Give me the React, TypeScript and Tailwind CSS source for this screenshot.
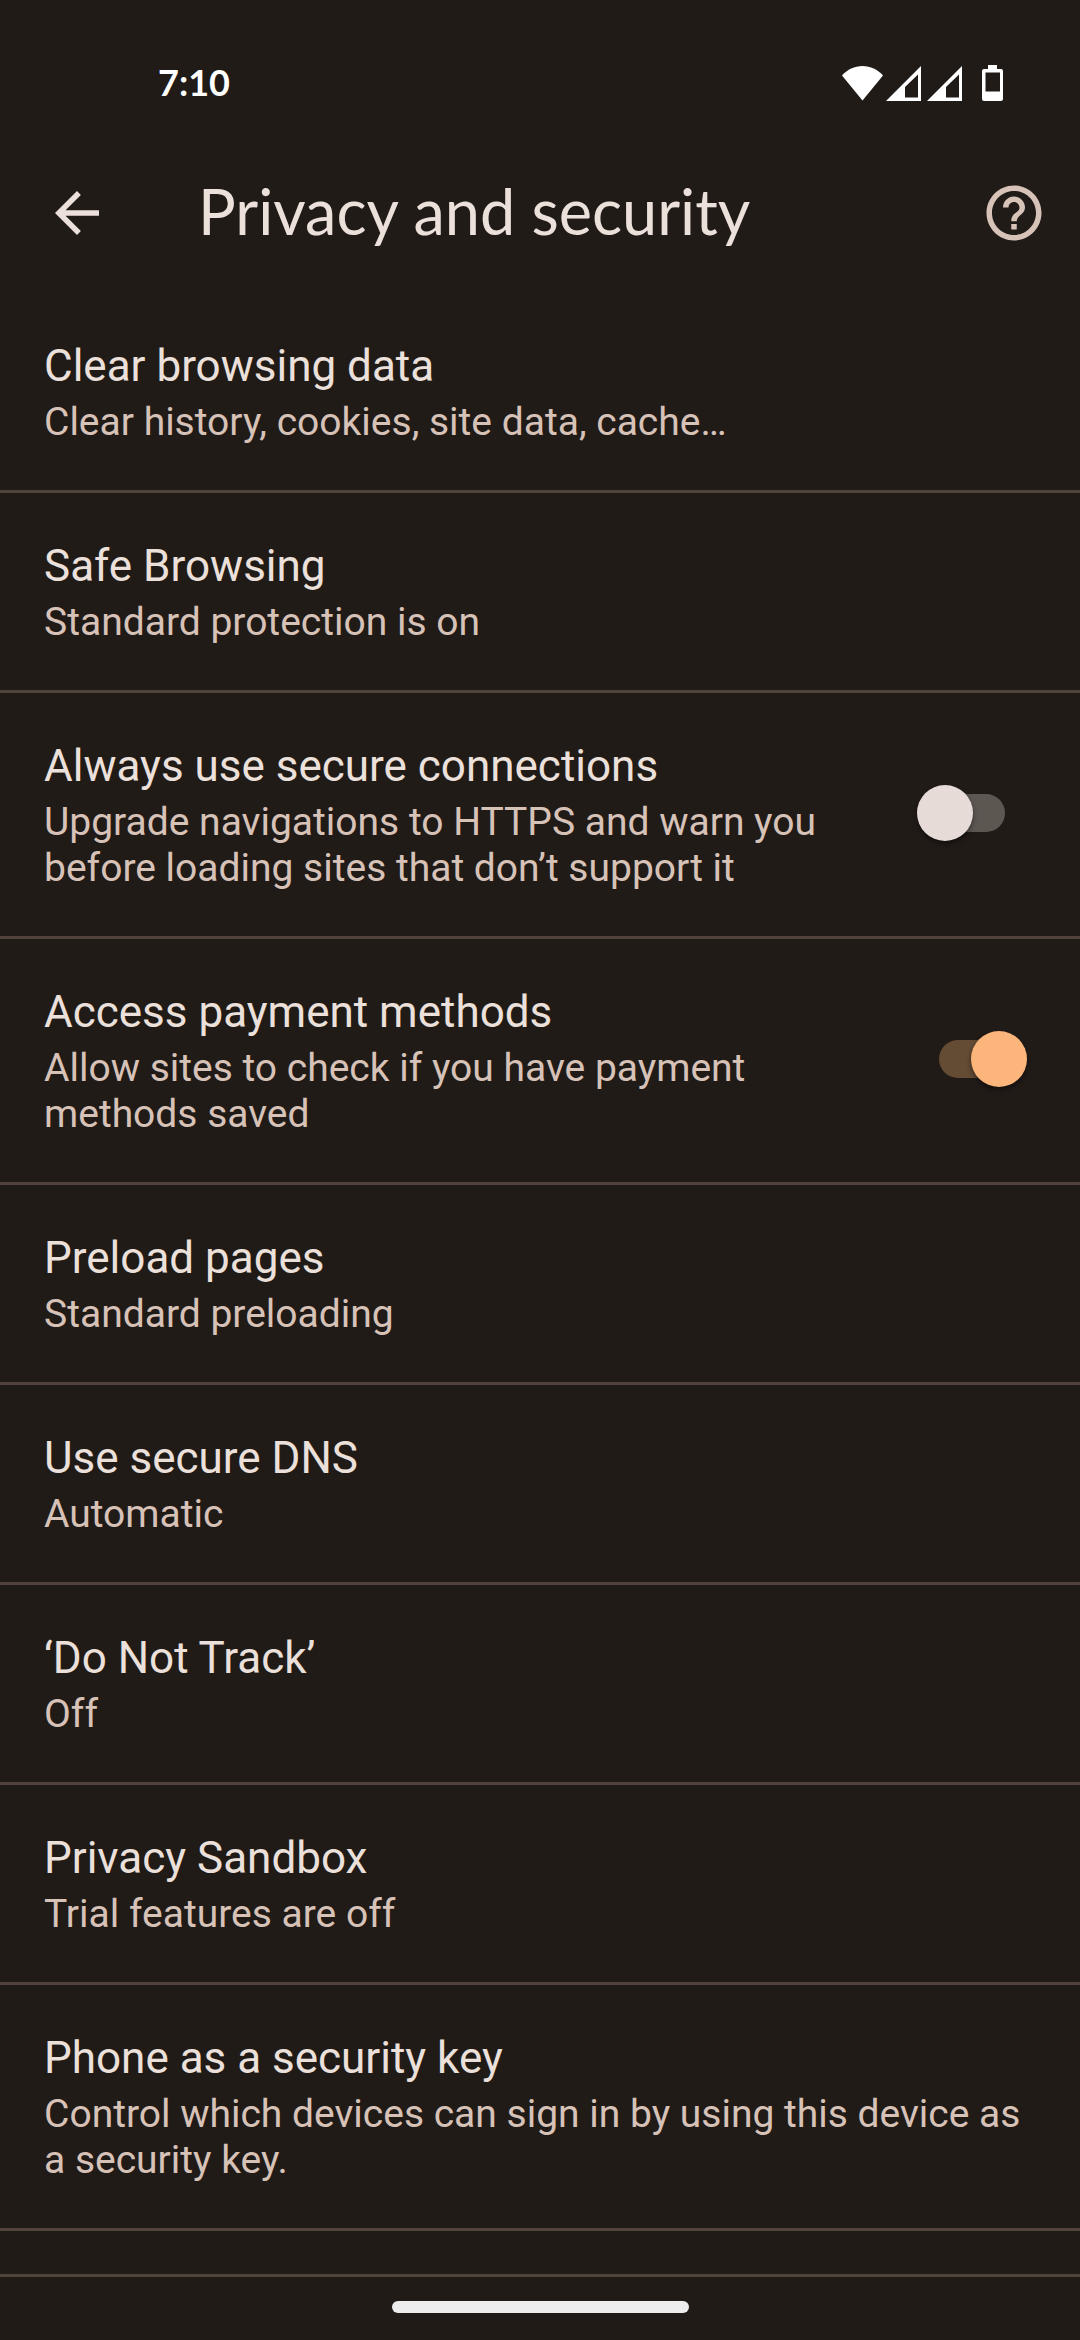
import { useState } from "react";
import { MdArrowBack, MdHelpOutline } from "react-icons/md";

type Setting = {
    title: string;
    summary: string;
    toggle?: boolean;
    on?: boolean;
};

const settings: Setting[] = [
    { title: "Clear browsing data", summary: "Clear history, cookies, site data, cache…" },
    { title: "Safe Browsing", summary: "Standard protection is on" },
    {
        title: "Always use secure connections",
        summary: "Upgrade navigations to HTTPS and warn you before loading sites that don’t support it",
        toggle: true,
        on: false,
    },
    {
        title: "Access payment methods",
        summary: "Allow sites to check if you have payment methods saved",
        toggle: true,
        on: true,
    },
    { title: "Preload pages", summary: "Standard preloading" },
    { title: "Use secure DNS", summary: "Automatic" },
    { title: "‘Do Not Track’", summary: "Off" },
    { title: "Privacy Sandbox", summary: "Trial features are off" },
    { title: "Phone as a security key", summary: "Control which devices can sign in by using this device as a security key." },
];

function SignalIcon() {
    return (
        <svg className="h-[35px] w-[35px]" viewBox="0 0 35 35" fill="#fff">
            <path fillRule="evenodd" d="M35 0v35H0zM32 8.5 19 21v10.5h13z" />
        </svg>
    );
}

function StatusBar() {
    return (
        <div className="flex items-center justify-between pt-[33px] pr-[77px] pl-[158px]">
            <span className="pb-0.5 font-[Lato,sans-serif] text-[36px] leading-[98px] font-bold text-white">7:10</span>
            <div className="flex items-center">
                <svg className="mr-[3px] h-[35px] w-[41px]" viewBox="0 0 41 35" fill="#fff">
                    <path d="M20.500 34.500 0 9.500C5.500 3.500 12.500 0 20.500 0S35.500 3.500 41 9.500z" />
                </svg>
                <SignalIcon />
                <span className="w-[6px]" />
                <SignalIcon />
                <svg className="ml-[20px] h-[36px] w-[21px]" viewBox="0 0 21 36" fill="#fff">
                    <path fillRule="evenodd" d="M6 0h9v4h4a2 2 0 0 1 2 2v28a2 2 0 0 1-2 2H2a2 2 0 0 1-2-2V6a2 2 0 0 1 2-2h4zM3.500 7.500v19h14.500v-19z" />
                </svg>
            </div>
        </div>
    );
}

function SettingText({ title, summary }: { title: string; summary: string }) {
    return (
        <span className="flex flex-1 flex-col gap-[5px]">
            <span className="text-[44px] leading-[56px] text-[#ece0db]">{title}</span>
            <span className="text-[39px] leading-[46px] text-[#d7c2b8]">{summary}</span>
        </span>
    );
}

function ToggleRow({ title, summary, on }: Setting) {
    const [checked, setChecked] = useState(!!on);
    return (
        <label className="relative flex w-full items-center gap-8 py-[45px] pr-[53px] pl-[44px]">
            <SettingText title={title} summary={summary} />
            <input
                type="checkbox"
                role="switch"
                className="peer sr-only"
                checked={checked}
                onChange={(e) => setChecked(e.target.checked)}
            />
            <span className="flex h-[60px] w-[110px] items-center justify-start pb-1 peer-checked:hidden">
                <span className="z-10 size-[56px] rounded-full bg-[#e6dbd6] shadow-[0_3px_5px_rgba(0,0,0,0.45)]" />
                <span className="-ml-[34px] h-[38px] w-[66px] rounded-full bg-[#5d5752]" />
            </span>
            <span className="hidden h-[60px] w-[110px] items-center justify-end pb-1 peer-checked:flex">
                <span className="-mr-[34px] h-[38px] w-[66px] rounded-full bg-[#634b34]" />
                <span className="z-10 size-[56px] rounded-full bg-[#fcb57b] shadow-[0_3px_5px_rgba(0,0,0,0.45)]" />
            </span>
        </label>
    );
}

export default function App() {
    return (
        <div className="flex min-h-screen flex-col bg-[#211b18] font-[Roboto,sans-serif]">
            <StatusBar />
            <header className="flex h-[160px] items-center pr-[33px] pl-[44px]">
                <button aria-label="Back">
                    <MdArrowBack className="size-[66px] text-[#ece0db]" />
                </button>
                <h1 className="flex-1 pb-1 pl-[88px] font-[Lato,sans-serif] text-[63px] leading-[72px] text-[#ece0db]">
                    Privacy and security
                </h1>
                <button aria-label="Help">
                    <MdHelpOutline className="size-[66px] text-[#d7c2b8]" />
                </button>
            </header>
            <main className="flex-1">
                <ul>
                    {settings.map((item) => (
                        <li key={item.title} className="border-b-3 border-[#51433b]">
                            {item.toggle ? (
                                <ToggleRow {...item} />
                            ) : (
                                <button className="flex w-full px-[44px] py-[45px] text-left">
                                    <SettingText title={item.title} summary={item.summary} />
                                </button>
                            )}
                        </li>
                    ))}
                </ul>
            </main>
            <footer className="flex h-[66px] justify-center border-t-3 border-[#51433b] pt-[24px]">
                <span className="h-[12px] w-[297px] rounded-full bg-[#ededed]" />
            </footer>
        </div>
    );
}
